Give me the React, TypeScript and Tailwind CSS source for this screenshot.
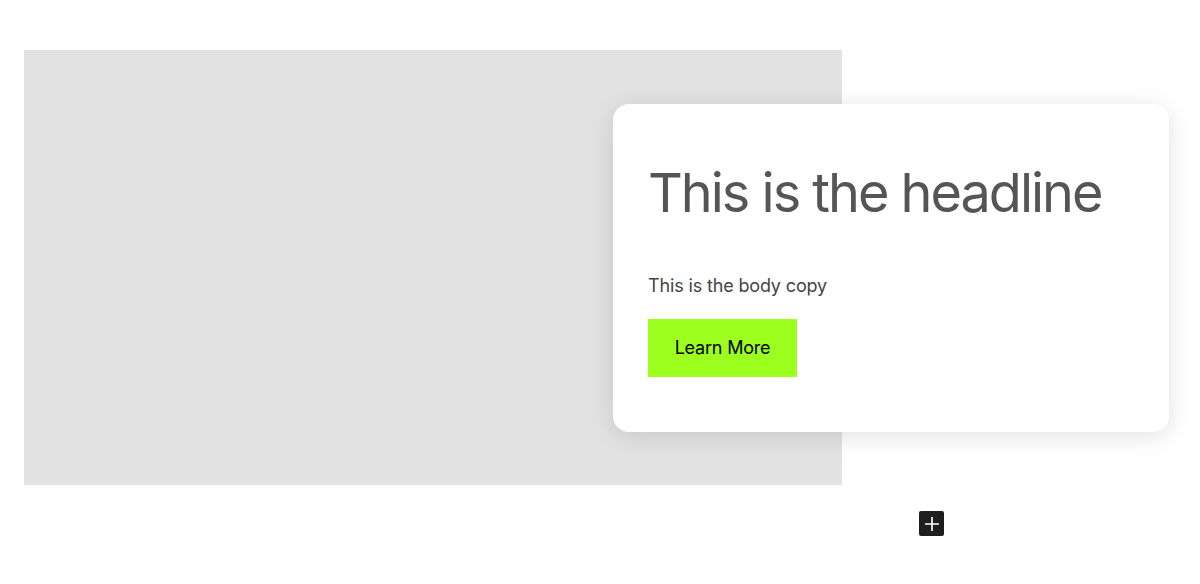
import { Plus } from "lucide-react";

export default function App() {
  return (
    <div className="min-h-[584px] w-[1200px] bg-white font-['Inter',sans-serif]">
      <div className="flex items-center pl-6 pt-[50px]">
        <div className="h-[435px] w-[818px] shrink-0 bg-[#e2e2e2]" />
        <div className="-ml-[229px] h-[328px] w-[556px] shrink-0 rounded-2xl bg-white px-[35px] pt-[57px] shadow-[0_4px_24px_rgba(0,0,0,0.12)]">
          <h1 className="text-[54px] leading-[64px] font-normal tracking-[-2px] text-[#555555]">
            This is the headline
          </h1>
          <p className="mt-[47px] text-[18px] leading-[28px] tracking-[-0.15px] text-[#444444]">This is the body copy</p>
          <button className="mt-[19px] h-[58px] w-[149px] bg-[#9dff1e] text-[18px] tracking-[-0.2px] text-black">
            Learn More
          </button>
        </div>
      </div>
      <div className="mt-[26px] pl-[919px]">
        <button className="flex h-[25px] w-[25px] items-center justify-center rounded-[2px] bg-[#1e1e1e] text-white">
          <Plus className="h-[22px] w-[22px]" strokeWidth={1.8} />
        </button>
      </div>
    </div>
  );
}
